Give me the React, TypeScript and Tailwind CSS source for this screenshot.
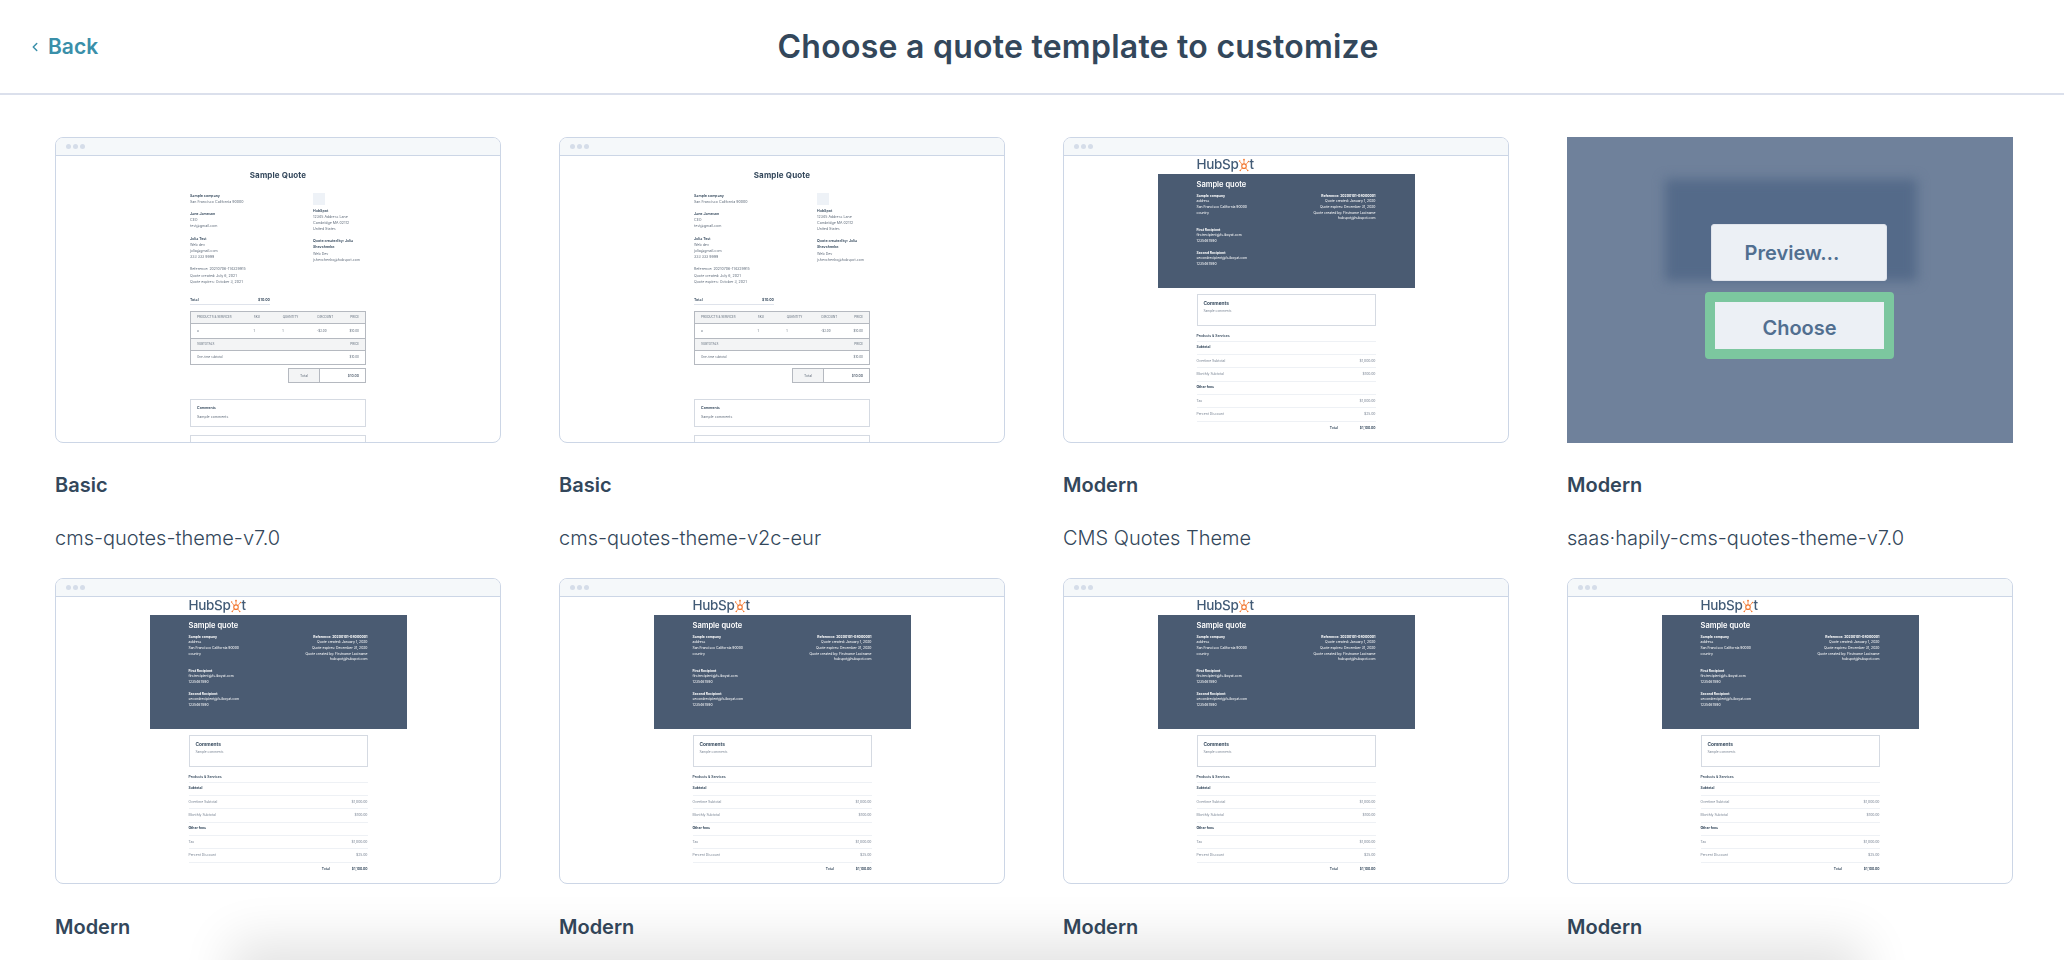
import { ChevronLeft } from "lucide-react";

const templates = [
  { kind: "basic", type: "Basic", name: "cms-quotes-theme-v7.0" },
  { kind: "basic", type: "Basic", name: "cms-quotes-theme-v2c-eur" },
  { kind: "modern", type: "Modern", name: "CMS Quotes Theme" },
  { kind: "hover", type: "Modern", name: "saas·hapily-cms-quotes-theme-v7.0" },
  { kind: "modern", type: "Modern" },
  { kind: "modern", type: "Modern" },
  { kind: "modern", type: "Modern" },
  { kind: "modern", type: "Modern" },
];

function BrowserBar() {
  return (
    <div className="flex h-[17.5px] shrink-0 items-center gap-[2px] border-b-[1.5px] border-[#ccd6e6] bg-[#f5f8fa] pl-[10px]">
      <span className="h-[5px] w-[5px] rounded-full bg-[#d5dde9]" />
      <span className="h-[5px] w-[5px] rounded-full bg-[#d5dde9]" />
      <span className="h-[5px] w-[5px] rounded-full bg-[#d5dde9]" />
    </div>
  );
}

function Sprocket() {
  return (
    <svg viewBox="0 0 16 18" className="mx-[-0.5px] inline-block h-[14px] w-[12px]" fill="none">
      <circle cx="8" cy="10.5" r="3" stroke="#f2762e" strokeWidth="1.5" />
      <path d="M8 7.5V3M5.6 8.6 2.6 4.4M10.4 8.6l3-3.8M5.8 12.8l-2.6 3.2M10.2 12.8l2.4 3.2" stroke="#f2762e" strokeWidth="1" />
      <circle cx="8" cy="2" r="1.2" fill="#f2762e" />
      <circle cx="2.2" cy="3.8" r="1" fill="#f2762e" />
      <circle cx="14" cy="4.2" r="1" fill="#f2762e" />
      <circle cx="3" cy="16.2" r="1" fill="#f2762e" />
      <circle cx="13" cy="16.2" r="1" fill="#f2762e" />
    </svg>
  );
}

function BasicPreview() {
  return (
    <div className="flex flex-col items-center blur-[0.4px] font-['Inter',sans-serif] text-[#5f6b7a]">
      <div className="mt-[14px] text-[8px] font-bold leading-[10px] tracking-[0.15px] text-[#33475b]">Sample Quote</div>
      <div className="mt-[13px] w-[176px] text-[3.6px] leading-[6.15px]">
        <div className="flex">
          <div className="w-[123px]">
            <div className="font-semibold text-[#33475b]">Sample company</div>
            <div>San Francisco California 90000</div>
            <div className="mt-[6.2px] font-semibold text-[#33475b]">Jane Jameson</div>
            <div>CEO</div>
            <div>test@gmail.com</div>
            <div className="mt-[6.2px] font-semibold text-[#33475b]">Julia Test</div>
            <div>Web dev</div>
            <div>julia@gmail.com</div>
            <div>333 333 9999</div>
            <div className="mt-[6.2px]">Reference: 20210706-114329915</div>
            <div>Quote created: July 6, 2021</div>
            <div>Quote expires: October 3, 2021</div>
          </div>
          <div className="flex-1">
            <div className="mb-[3px] h-[12px] w-[12px] bg-[#eef2f7]" />
            <div className="font-semibold text-[#33475b]">HubSpot</div>
            <div>12345 Address Lane</div>
            <div>Cambridge MA 02112</div>
            <div>United States</div>
            <div className="mt-[6.2px] font-semibold text-[#33475b]">Quote created by: Julia</div>
            <div className="font-semibold text-[#33475b]">Shevchenko</div>
            <div>Web Dev</div>
            <div>jshevchenko@hubspot.com</div>
          </div>
        </div>
        <div className="mt-[12px] flex w-[80px] justify-between border-b-[1.5px] border-[#dfe3eb] pb-[1px] font-semibold text-[#33475b]">
          <span>Total</span>
          <span>$10.00</span>
        </div>
        <div className="mt-[6px] border border-[#b5b9c0] text-[3px] leading-[11px]">
          <div className="flex justify-between bg-[#f3f4f5] px-[6px]">
            <span className="w-[56px]">PRODUCTS & SERVICES</span>
            <span className="w-[28px]">SKU</span>
            <span className="w-[34px]">QUANTITY</span>
            <span className="w-[32px]">DISCOUNT</span>
            <span>PRICE</span>
          </div>
          <div className="flex justify-between border-y border-[#b5b9c0] px-[6px] leading-[14px]">
            <span className="w-[56px]">a</span>
            <span className="w-[28px]">1</span>
            <span className="w-[34px]">1</span>
            <span className="w-[32px]">-$2.00</span>
            <span>$10.00</span>
          </div>
          <div className="flex justify-between border-b border-[#b5b9c0] bg-[#f3f4f5] px-[6px]">
            <span>SUBTOTALS</span>
            <span>PRICE</span>
          </div>
          <div className="flex justify-between px-[6px] leading-[13px]">
            <span>One-time subtotal</span>
            <span>$10.00</span>
          </div>
        </div>
        <div className="mt-[3px] ml-auto flex h-[15px] w-[78px] items-center border border-[#b5b9c0] text-[3.4px]">
          <div className="flex h-full w-[31px] items-center justify-center border-r border-[#b5b9c0] bg-[#f3f4f5]">Total</div>
          <div className="flex-1 pr-[6px] text-right font-semibold">$10.00</div>
        </div>
        <div className="mt-[16px] h-[28px] border border-[#d5dae2] px-[6px] pt-[5px] leading-[6px]">
          <div className="font-semibold text-[#33475b]">Comments</div>
          <div className="mt-[3px]">Sample comments</div>
        </div>
        <div className="mt-[8px] h-[20px] border border-[#d5dae2]" />
      </div>
    </div>
  );
}

function ModernPreview() {
  const rows: [string, string, boolean?][] = [
    ["Subtotal", "", true],
    ["Overtime Subtotal", "$1,000.00"],
    ["Monthly Subtotal", "$100.00"],
    ["Other fees", "", true],
    ["Tax", "$1,000.00"],
    ["Percent Discount", "$25.00"],
  ];
  return (
    <div className="flex flex-col items-center blur-[0.35px] font-['Inter',sans-serif]">
      <div className="flex h-[18px] w-[179px] items-center pt-[1px] text-[13.5px] font-medium leading-none tracking-[-0.3px] text-[#425b76]">
        HubSp
        <Sprocket />t
      </div>
      <div className="h-[114px] w-[257px] bg-[#4a5b72] text-white">
        <div className="mx-auto w-[179px] pt-[6px] text-[3.4px] leading-[5.7px]">
          <div className="text-[7.5px] font-semibold leading-[10px]">Sample quote</div>
          <div className="mt-[4px] flex justify-between">
            <div>
              <div className="font-bold">Sample company</div>
              <div>address</div>
              <div>San Francisco California 90000</div>
              <div>country</div>
              <div className="mt-[11.4px] font-bold">First Recipient</div>
              <div>firstrecipient@fs.iboyat.com</div>
              <div>1235467890</div>
              <div className="mt-[5.7px] font-bold">Second Recipient</div>
              <div>secondrecipient@fs.iboyat.com</div>
              <div>1235467890</div>
            </div>
            <div className="text-right">
              <div className="font-bold">Reference: 20200101-08000001</div>
              <div>Quote created: January 1, 2020</div>
              <div>Quote expires: December 31, 2020</div>
              <div>Quote created by: Firstname Lastname</div>
              <div>hubspot@hubspot.com</div>
            </div>
          </div>
        </div>
      </div>
      <div className="mt-[6px] h-[32px] w-[179px] border-[1.5px] border-[#d5dae2] px-[6px] pt-[4px]">
        <div className="text-[4.8px] font-bold leading-[8px] text-[#33475b]">Comments</div>
        <div className="mt-[1.5px] text-[3.2px] leading-[6px] text-[#7a8594]">Sample comments</div>
      </div>
      <div className="mt-[6px] w-[179px] text-[3.4px] text-[#7a8594]">
        <div className="h-[10px] border-b border-[#eef1f5] font-semibold leading-[8px] text-[#33475b]">Products & Services</div>
        {rows.map(([label, value, bold]) => (
          <div
            key={label}
            className={`flex h-[13.4px] items-center justify-between border-b border-[#eef1f5] ${bold ? "font-bold text-[#33475b]" : ""}`}
          >
            <span>{label}</span>
            <span>{value}</span>
          </div>
        ))}
        <div className="mt-[4px] flex justify-end gap-[22px] font-semibold text-[#33475b]">
          <span>Total</span>
          <span>$1,100.00</span>
        </div>
      </div>
    </div>
  );
}

function HoverPreview() {
  return (
    <div className="relative h-[306px] w-full overflow-hidden bg-[#6f819b]">
      <div className="absolute left-[98px] top-[42px] h-[102px] w-[252px] bg-[#546a89] blur-[6px]" />
      <div className="relative flex flex-col items-start pl-[138px] pt-[87px] font-['Inter',sans-serif] text-[20px] font-semibold text-[#516f90]">
        <button className="ml-[6px] h-[57px] w-[176px] rounded-[3px] border border-[#dfe3eb] bg-[#ecf0f5] pr-[14px]">Preview…</button>
        <div className="mt-[11px] rounded-[4px] bg-[#7cc79f] p-[10px]">
          <button className="h-[47px] w-[169px] bg-[#ecf0f5] pt-[4px]">Choose</button>
        </div>
      </div>
    </div>
  );
}

function TemplateCard({ kind, type, name }: { kind: string; type: string; name?: string }) {
  return (
    <div className="h-[441px]">
      {kind === "hover" ? (
        <HoverPreview />
      ) : (
        <div className="flex h-[306px] flex-col overflow-hidden rounded-[8px] border-[1.5px] border-[#ccd6e6] bg-white">
          <BrowserBar />
          {kind === "basic" ? <BasicPreview /> : <ModernPreview />}
        </div>
      )}
      <div className={`text-[20px] font-semibold leading-[28px] text-[#33475b] ${name ? "mt-[28px]" : "mt-[29px]"}`}>{type}</div>
      {name && <div className="mt-[25px] text-[20px] font-light leading-[28px] text-[#33475b]">{name}</div>}
    </div>
  );
}

export default function App() {
  return (
    <div className="relative h-[960px] overflow-hidden bg-white font-['Inter',sans-serif]">
      <header className="flex h-[95px] items-center border-b-2 border-[#dbe0ec] pl-[28px]">
        <a className="flex items-center gap-[6px] text-[21px] font-semibold text-[#3a8fa9]">
          <ChevronLeft className="h-[14px] w-[14px]" strokeWidth={2.5} />
          Back
        </a>
        <h1 className="flex-1 pr-[6px] text-center text-[32px] font-semibold tracking-[0.25px] text-[#33475b]">Choose a quote template to customize</h1>
      </header>
      <main className="grid grid-cols-[repeat(4,446px)] gap-x-[58px] pl-[55px] pt-[42px]">
        {templates.map((t, i) => (
          <TemplateCard key={i} kind={t.kind} type={t.type} name={t.name} />
        ))}
      </main>
      <div className="absolute left-[260px] right-[230px] top-[970px] h-[40px] shadow-[0_0_50px_30px_rgba(0,0,0,0.11)]" />
    </div>
  );
}
